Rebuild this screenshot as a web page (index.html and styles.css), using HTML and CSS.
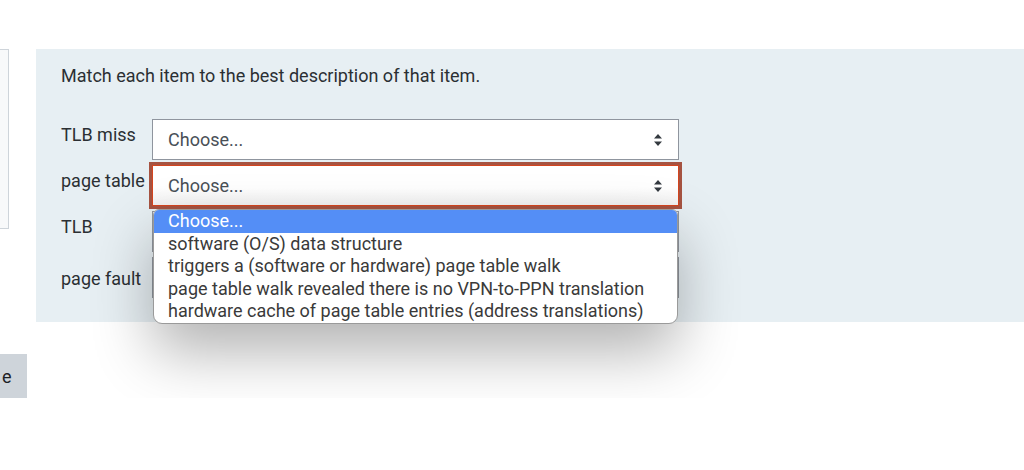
FILE: index.html
```html
<!DOCTYPE html>
<html lang="en">
<head>
    <meta charset="UTF-8">
    <title>Question</title>
    <link rel="stylesheet" href="styles.css">
</head>
<body>
    <div class="page">
        <div class="side">
            <div class="side-panel"></div>
            <button class="side-btn">e</button>
        </div>

        <div class="que">
            <p class="qtext">Match each item to the best description of that item.</p>

            <div class="row">
                <label class="label">TLB miss</label>
                <div class="control">
                    <div class="select">
                        <span>Choose...</span>
                        <svg class="arrows" width="8" height="14" viewBox="0 0 8 14"><path d="M0 5.5L4 1l4 4.5z M0 8.5L4 13l4-4.5z" fill="#343a40"/></svg>
                    </div>
                </div>
            </div>

            <div class="row">
                <label class="label">page table</label>
                <div class="control">
                    <div class="select focused">
                        <span>Choose...</span>
                        <svg class="arrows" width="8" height="14" viewBox="0 0 8 14"><path d="M0 5.5L4 1l4 4.5z M0 8.5L4 13l4-4.5z" fill="#343a40"/></svg>
                    </div>
                    <ul class="dropdown">
                        <li class="active">Choose...</li>
                        <li>software (O/S) data structure</li>
                        <li>triggers a (software or hardware) page table walk</li>
                        <li>page table walk revealed there is no VPN-to-PPN translation</li>
                        <li>hardware cache of page table entries (address translations)</li>
                    </ul>
                </div>
            </div>

            <div class="row">
                <label class="label">TLB</label>
                <div class="control">
                    <div class="select">
                        <span>Choose...</span>
                    </div>
                </div>
            </div>

            <div class="row last">
                <label class="label">page fault</label>
                <div class="control">
                    <div class="select">
                        <span>Choose...</span>
                    </div>
                </div>
            </div>
        </div>
    </div>
</body>
</html>
```

FILE: styles.css
```css
* {
    box-sizing: border-box;
}

body {
    margin: 0;
    background: #fff;
    font-family: Roboto, "Liberation Sans", sans-serif;
    color: #1d2125;
}

.page {
    display: flex;
    align-items: flex-start;
    padding-top: 49px;
}

.side {
    width: 36px;
    display: flex;
    flex-direction: column;
}

.side-panel {
    width: 9px;
    height: 180px;
    background: #f8f9fa;
    border: 1px solid #ced4da;
    border-left: none;
}

.side-btn {
    margin-top: 125px;
    width: 27px;
    height: 44px;
    border: none;
    padding: 0 0 0 2px;
    text-align: left;
    background: #ced4da;
    font: 18px Roboto, "Liberation Sans", sans-serif;
    color: #1d2125;
}

.que {
    flex: 1;
    height: 273px;
    background: #e7eff3;
    padding: 13px 25px 0;
}

.qtext {
    margin: 0 0 30px;
    font-size: 18px;
    line-height: 27px;
    color: #2b2f33;
}

.row {
    display: flex;
    align-items: flex-start;
    margin-bottom: 5px;
}

.label {
    width: 91px;
    font-size: 18px;
    line-height: 27px;
    padding-top: 2px;
    color: #2b2f33;
    white-space: nowrap;
}

.row.last .label {
    padding-top: 8px;
}

.control {
    position: relative;
    width: 527px;
}

.select {
    height: 41px;
    border: 1px solid #8f959e;
    background: #fff;
    padding: 0 16px 0 15px;
    display: flex;
    align-items: center;
    justify-content: space-between;
    font-size: 18px;
    color: #495057;
}

.select.focused {
    border-color: #d4451f;
    box-shadow: 0 0 0 3px #a65341;
    background: linear-gradient(#fff 55%, #f1f1f1);
}

.dropdown {
    position: absolute;
    top: 44px;
    left: 1px;
    right: 1px;
    margin: 0;
    padding: 0;
    list-style: none;
    background: #fff;
    border: 1px solid #9a9a9a;
    border-radius: 6px 6px 9px 9px;
    overflow: hidden;
    box-shadow: 0 28px 60px rgba(0, 0, 0, 0.3);
    z-index: 5;
}

.dropdown li {
    height: 22.6px;
    line-height: 22.6px;
    padding-left: 14px;
    font-size: 18px;
    color: #3a3a3a;
    white-space: nowrap;
}

.dropdown li.active {
    background: #548ef6;
    color: #fff;
}
```
